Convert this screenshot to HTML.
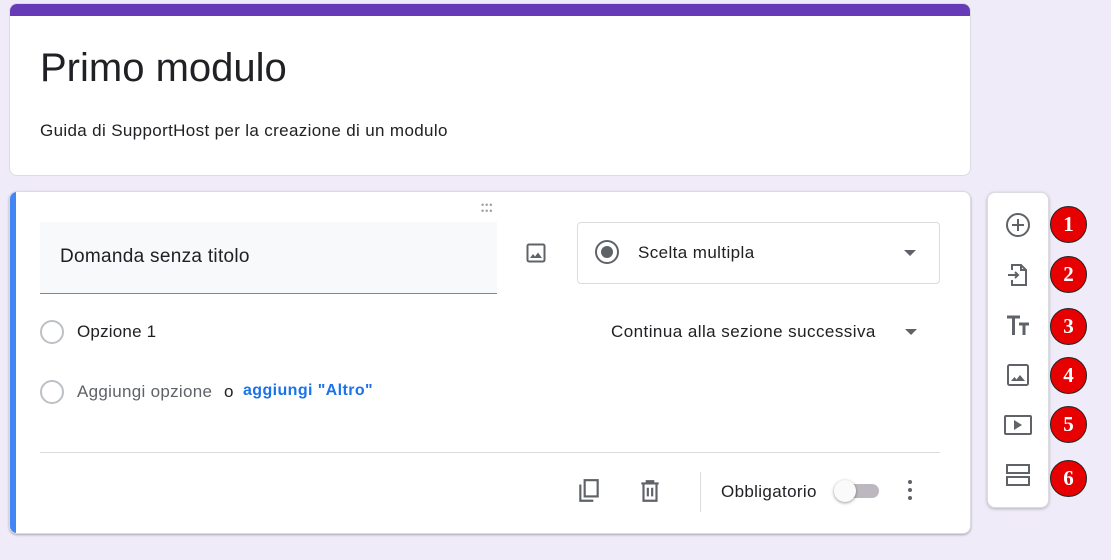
<!DOCTYPE html>
<html><head><meta charset="utf-8"><style>
*{box-sizing:border-box;margin:0;padding:0}
body{width:1111px;height:560px;background:#f0ebf8;font-family:"Liberation Sans",Arial,sans-serif;position:relative;overflow:hidden;color:#202124}
.card{position:absolute;background:#fff;border-radius:8px;border:1px solid #dadce0}
.abs{position:absolute;white-space:nowrap}
svg{position:absolute}
.num{position:absolute;width:37px;height:37px;border-radius:50%;background:#e60000;border:1.5px solid #222;color:#fff;font-family:"Liberation Serif",serif;font-weight:bold;font-size:21px;text-align:center;line-height:34px}
</style></head><body>
<div class="card" style="left:9px;top:3px;width:962px;height:173px;overflow:hidden">
  <div class="abs" style="left:0;top:0;width:100%;height:12px;background:#673ab7"></div>
  <div class="abs" style="left:30px;top:42px;font-size:40px;color:#202124">Primo modulo</div>
  <div class="abs" style="left:30px;top:117px;font-size:17px;letter-spacing:0.35px;color:#202124">Guida di SupportHost per la creazione di un modulo</div>
</div>
<div class="card" style="left:9px;top:191px;width:962px;height:343px;overflow:hidden;box-shadow:0 1px 2px rgba(0,0,0,.3)">
  <div class="abs" style="left:0;top:0;width:6px;height:100%;background:#4285f4"></div>
  <div class="abs" style="left:471px;top:10px;width:22px;color:#9aa0a6;font-size:9px;letter-spacing:1px;line-height:6px">•••<br>•••</div>
  <div class="abs" style="left:30px;top:30px;width:457px;height:72px;background:#f8f9fa;border-bottom:1px solid #80868b"></div>
  <div class="abs" style="left:50px;top:54px;font-size:19px;letter-spacing:0.3px">Domanda senza titolo</div>
  <svg style="left:514px;top:49px" width="24" height="24" viewBox="0 0 24 24"><rect x="3.5" y="3.5" width="17" height="17" rx="1.5" fill="none" stroke="#5f6368" stroke-width="2"/><path d="M6 17l3-4 2 2.5 3-4 4 5.5z" fill="#5f6368"/></svg>
  <div class="abs" style="left:567px;top:30px;width:363px;height:62px;border:1px solid #dadce0;border-radius:4px"></div>
  <svg style="left:584px;top:47px" width="26" height="26" viewBox="0 0 26 26"><circle cx="13" cy="13" r="11" fill="none" stroke="#5f6368" stroke-width="2"/><circle cx="13" cy="13" r="6" fill="#5f6368"/></svg>
  <div class="abs" style="left:628px;top:51px;font-size:17px;letter-spacing:0.4px">Scelta multipla</div>
  <div class="abs" style="left:894px;top:58px;border-left:6px solid transparent;border-right:6px solid transparent;border-top:6px solid #5f6368"></div>
  <div class="abs" style="left:30px;top:128px;width:24px;height:24px;border:2px solid #bdc1c6;border-radius:50%"></div>
  <div class="abs" style="left:67px;top:130px;font-size:17px;letter-spacing:0.2px">Opzione 1</div>
  <div class="abs" style="left:601px;top:130px;font-size:17px;letter-spacing:0.45px">Continua alla sezione successiva</div>
  <div class="abs" style="left:895px;top:137px;border-left:6px solid transparent;border-right:6px solid transparent;border-top:6px solid #5f6368"></div>
  <div class="abs" style="left:30px;top:188px;width:24px;height:24px;border:2px solid #bdc1c6;border-radius:50%"></div>
  <div class="abs" style="left:67px;top:190px;font-size:17px;letter-spacing:0.3px;color:#5f6368">Aggiungi opzione</div>
  <div class="abs" style="left:214px;top:190px;font-size:17px">o</div>
  <div class="abs" style="left:233px;top:190px;font-size:16px;letter-spacing:0.4px;color:#1a73e8;font-weight:bold">aggiungi "Altro"</div>
  <div class="abs" style="left:30px;top:260px;width:900px;height:1px;background:#dadce0"></div>
  <svg style="left:566px;top:286px" width="26" height="26" viewBox="0 0 24 24"><path d="M4 6v15h12" fill="none" stroke="#5f6368" stroke-width="2"/><rect x="8" y="2" width="12" height="15" fill="none" stroke="#5f6368" stroke-width="2"/></svg>
  <svg style="left:627px;top:286px" width="26" height="26" viewBox="0 0 24 24"><path d="M4 5h16M9 5V3h6v2M6 5v16h12V5M10 9v8M14 9v8" fill="none" stroke="#5f6368" stroke-width="2"/></svg>
  <div class="abs" style="left:690px;top:280px;width:1px;height:40px;background:#dadce0"></div>
  <div class="abs" style="left:711px;top:290px;font-size:17px;letter-spacing:0.35px">Obbligatorio</div>
  <div class="abs" style="left:833px;top:292px;width:36px;height:14px;border-radius:7px;background:#bdb8bf"></div>
  <div class="abs" style="left:824px;top:288px;width:22px;height:22px;border-radius:50%;background:#fafafa;box-shadow:0 1px 3px rgba(0,0,0,.4)"></div>
  <div class="abs" style="left:898px;top:288px;width:4px;font-size:0">
    <div style="width:4px;height:4px;border-radius:2px;background:#5f6368;margin-bottom:4px"></div>
    <div style="width:4px;height:4px;border-radius:2px;background:#5f6368;margin-bottom:4px"></div>
    <div style="width:4px;height:4px;border-radius:2px;background:#5f6368"></div>
  </div>
</div>
<div class="card" style="left:987px;top:192px;width:62px;height:316px;box-shadow:0 1px 3px rgba(0,0,0,.25)"></div>
<svg style="left:1005px;top:212px" width="26" height="26" viewBox="0 0 26 26"><circle cx="13" cy="13" r="11" fill="none" stroke="#5f6368" stroke-width="2"/><path d="M13 7v12M7 13h12" stroke="#5f6368" stroke-width="2"/></svg>
<svg style="left:1005px;top:262px" width="26" height="26" viewBox="0 0 26 26"><path d="M7 8V3h9l5 5v15H7v-5M16 3v5h5" fill="none" stroke="#5f6368" stroke-width="2"/><path d="M3 13h10M10 10l3 3-3 3" fill="none" stroke="#5f6368" stroke-width="2"/></svg>
<svg style="left:1005px;top:313px" width="26" height="26" viewBox="0 0 26 26"><path d="M2 4h13M8.5 4v18M14 11h10M19 11v11" fill="none" stroke="#5f6368" stroke-width="3"/></svg>
<svg style="left:1005px;top:362px" width="26" height="26" viewBox="0 0 26 26"><rect x="3" y="3" width="20" height="20" rx="1.5" fill="none" stroke="#5f6368" stroke-width="2"/><path d="M6 19l3.5-4 2 2.5 3.5-4.5 5 6z" fill="#5f6368"/></svg>
<svg style="left:1003px;top:412px" width="30" height="26" viewBox="0 0 30 26"><rect x="2" y="4" width="26" height="18" rx="1" fill="none" stroke="#5f6368" stroke-width="2"/><path d="M11 8v10l8-5z" fill="#5f6368"/></svg>
<svg style="left:1005px;top:462px" width="26" height="26" viewBox="0 0 26 26"><rect x="2" y="3" width="22" height="8" fill="none" stroke="#5f6368" stroke-width="2"/><rect x="2" y="15" width="22" height="8" fill="none" stroke="#5f6368" stroke-width="2"/></svg>
<div class="num" style="left:1050px;top:206px">1</div>
<div class="num" style="left:1050px;top:256px">2</div>
<div class="num" style="left:1050px;top:308px">3</div>
<div class="num" style="left:1050px;top:357px">4</div>
<div class="num" style="left:1050px;top:406px">5</div>
<div class="num" style="left:1050px;top:460px">6</div>
</body></html>
